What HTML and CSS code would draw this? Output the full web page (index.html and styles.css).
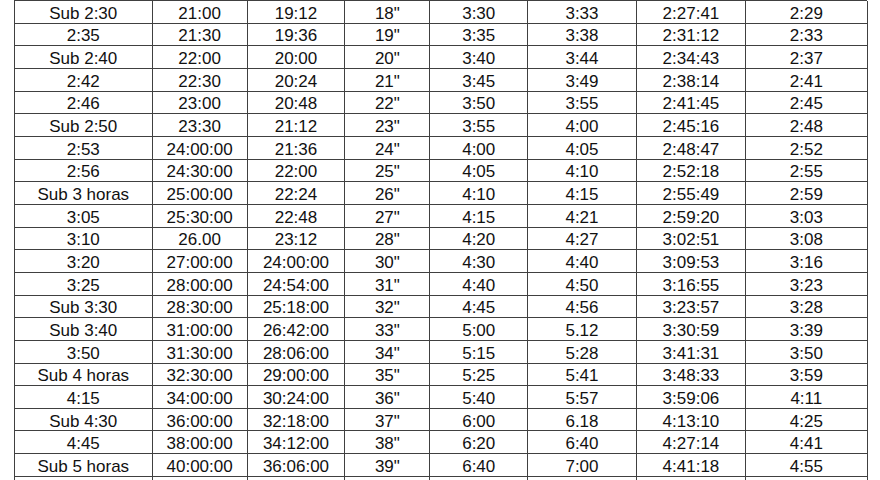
FILE: index.html
```html
<!DOCTYPE html>
<html lang="es">
<head>
<meta charset="utf-8">
<title>Tabla de ritmos</title>
<link rel="stylesheet" href="styles.css">
</head>
<body>
<div class="sheet">
  <div class="c">Sub 2:30</div><div class="c">21:00</div><div class="c">19:12</div><div class="c">18"</div><div class="c">3:30</div><div class="c">3:33</div><div class="c">2:27:41</div><div class="c">2:29</div>
  <div class="c">2:35</div><div class="c">21:30</div><div class="c">19:36</div><div class="c">19"</div><div class="c">3:35</div><div class="c">3:38</div><div class="c">2:31:12</div><div class="c">2:33</div>
  <div class="c">Sub 2:40</div><div class="c">22:00</div><div class="c">20:00</div><div class="c">20"</div><div class="c">3:40</div><div class="c">3:44</div><div class="c">2:34:43</div><div class="c">2:37</div>
  <div class="c">2:42</div><div class="c">22:30</div><div class="c">20:24</div><div class="c">21"</div><div class="c">3:45</div><div class="c">3:49</div><div class="c">2:38:14</div><div class="c">2:41</div>
  <div class="c">2:46</div><div class="c">23:00</div><div class="c">20:48</div><div class="c">22"</div><div class="c">3:50</div><div class="c">3:55</div><div class="c">2:41:45</div><div class="c">2:45</div>
  <div class="c">Sub 2:50</div><div class="c">23:30</div><div class="c">21:12</div><div class="c">23"</div><div class="c">3:55</div><div class="c">4:00</div><div class="c">2:45:16</div><div class="c">2:48</div>
  <div class="c">2:53</div><div class="c">24:00:00</div><div class="c">21:36</div><div class="c">24"</div><div class="c">4:00</div><div class="c">4:05</div><div class="c">2:48:47</div><div class="c">2:52</div>
  <div class="c">2:56</div><div class="c">24:30:00</div><div class="c">22:00</div><div class="c">25"</div><div class="c">4:05</div><div class="c">4:10</div><div class="c">2:52:18</div><div class="c">2:55</div>
  <div class="c">Sub 3 horas</div><div class="c">25:00:00</div><div class="c">22:24</div><div class="c">26"</div><div class="c">4:10</div><div class="c">4:15</div><div class="c">2:55:49</div><div class="c">2:59</div>
  <div class="c">3:05</div><div class="c">25:30:00</div><div class="c">22:48</div><div class="c">27"</div><div class="c">4:15</div><div class="c">4:21</div><div class="c">2:59:20</div><div class="c">3:03</div>
  <div class="c">3:10</div><div class="c">26.00</div><div class="c">23:12</div><div class="c">28"</div><div class="c">4:20</div><div class="c">4:27</div><div class="c">3:02:51</div><div class="c">3:08</div>
  <div class="c">3:20</div><div class="c">27:00:00</div><div class="c">24:00:00</div><div class="c">30"</div><div class="c">4:30</div><div class="c">4:40</div><div class="c">3:09:53</div><div class="c">3:16</div>
  <div class="c">3:25</div><div class="c">28:00:00</div><div class="c">24:54:00</div><div class="c">31"</div><div class="c">4:40</div><div class="c">4:50</div><div class="c">3:16:55</div><div class="c">3:23</div>
  <div class="c">Sub 3:30</div><div class="c">28:30:00</div><div class="c">25:18:00</div><div class="c">32"</div><div class="c">4:45</div><div class="c">4:56</div><div class="c">3:23:57</div><div class="c">3:28</div>
  <div class="c">Sub 3:40</div><div class="c">31:00:00</div><div class="c">26:42:00</div><div class="c">33"</div><div class="c">5:00</div><div class="c">5.12</div><div class="c">3:30:59</div><div class="c">3:39</div>
  <div class="c">3:50</div><div class="c">31:30:00</div><div class="c">28:06:00</div><div class="c">34"</div><div class="c">5:15</div><div class="c">5:28</div><div class="c">3:41:31</div><div class="c">3:50</div>
  <div class="c">Sub 4 horas</div><div class="c">32:30:00</div><div class="c">29:00:00</div><div class="c">35"</div><div class="c">5:25</div><div class="c">5:41</div><div class="c">3:48:33</div><div class="c">3:59</div>
  <div class="c">4:15</div><div class="c">34:00:00</div><div class="c">30:24:00</div><div class="c">36"</div><div class="c">5:40</div><div class="c">5:57</div><div class="c">3:59:06</div><div class="c">4:11</div>
  <div class="c">Sub 4:30</div><div class="c">36:00:00</div><div class="c">32:18:00</div><div class="c">37"</div><div class="c">6:00</div><div class="c">6.18</div><div class="c">4:13:10</div><div class="c">4:25</div>
  <div class="c">4:45</div><div class="c">38:00:00</div><div class="c">34:12:00</div><div class="c">38"</div><div class="c">6:20</div><div class="c">6:40</div><div class="c">4:27:14</div><div class="c">4:41</div>
  <div class="c">Sub 5 horas</div><div class="c">40:00:00</div><div class="c">36:06:00</div><div class="c">39"</div><div class="c">6:40</div><div class="c">7:00</div><div class="c">4:41:18</div><div class="c">4:55</div>
  <div class="c"></div><div class="c"></div><div class="c"></div><div class="c"></div><div class="c"></div><div class="c"></div><div class="c"></div><div class="c"></div>
</div>
</body>
</html>
```
FILE: styles.css
```css
html, body {
  margin: 0;
  padding: 0;
  background: #ffffff;
}
body {
  width: 880px;
  height: 480px;
  overflow: hidden;
  font-family: "Liberation Sans", Arial, sans-serif;
  color: #111111;
}
.sheet {
  margin-left: 14px;
  width: 853px;
  display: grid;
  grid-template-columns: 137.5px 95.2px 97.6px 85.2px 97.5px 109px 109px 121.7px;
  grid-auto-rows: 22.67px;
  border-left: 1px solid #404040;
  border-top: 1px solid #404040;
  box-sizing: border-box;
}
.c {
  box-sizing: border-box;
  border-right: 1px solid #404040;
  border-bottom: 1px solid #404040;
  display: flex;
  align-items: center;
  justify-content: center;
  font-size: 17px;
  line-height: 1;
  padding-top: 3px;
  white-space: nowrap;
}
```
